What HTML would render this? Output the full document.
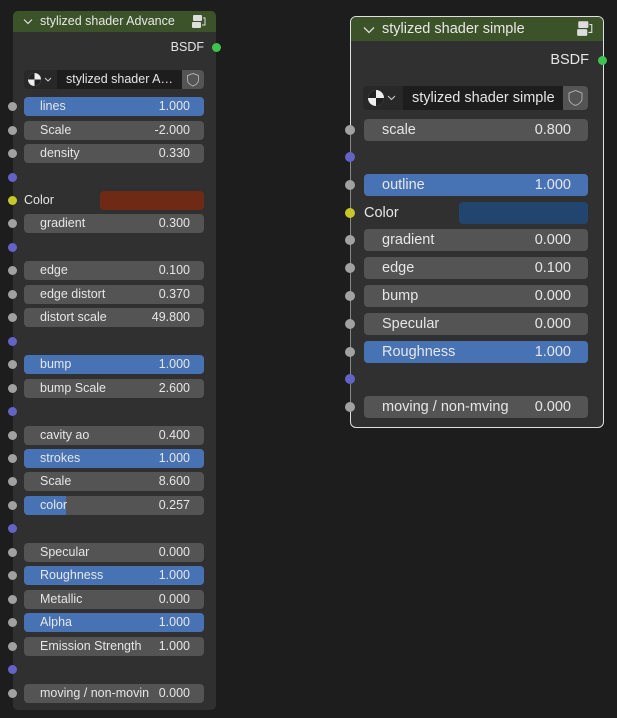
<!DOCTYPE html><html><head><style>
body{margin:0;width:617px;height:718px;background:#1d1d1d;position:relative;overflow:hidden;font-family:"Liberation Sans","DejaVu Sans",sans-serif;color:#e6e6e6}
.a{position:absolute;box-sizing:border-box}
.node{background:#303030;border-radius:5px;overflow:hidden}
.hdr{background:#3c5329;left:0;right:0;top:0}
.f{background:#545454;border-radius:4px;overflow:hidden}
.f .l{position:absolute;top:0;white-space:nowrap}
.f .v{position:absolute;top:0;white-space:nowrap}
.s{border-radius:50%;background:#a1a1a1}
.s.p{background:#6363c7}.s.y{background:#c7c729}.s.g{background:#3fc34f}
</style></head><body>
<div class="a node" style="left:13px;top:11px;width:203px;height:699px">
 <div class="a hdr" style="height:21px"></div>
 <svg class="a" style="left:10px;top:7px" width="10" height="7"><path d="M1 1.5l4 4 4-4" stroke="#ddd" stroke-width="1.2" fill="none"/></svg>
 <div class="a" style="left:27px;top:2px;font-size:12.5px;line-height:17px;color:#e8e8e8;white-space:nowrap">stylized shader Advance</div>
 <svg class="a" style="left:178px;top:3px" width="16" height="15" viewBox="0 0 16 15"><rect x="2" y="1" width="9" height="6" rx="1" fill="#ddd"/><rect x="1" y="8" width="9" height="6" rx="1" fill="#ddd"/><path d="M12 4h2v7h-3" stroke="#ddd" fill="none"/></svg>
 <div class="a" style="right:12px;top:28px;font-size:12.5px;line-height:16px">BSDF</div>
 <div class="a" style="left:11px;top:59px;width:33px;height:19px;background:#282828;border-radius:4px 0 0 4px"></div>
 <svg class="a" style="left:14px;top:61px" width="28" height="15"><circle cx="7.5" cy="7.5" r="6.5" fill="#eee"/><path d="M7.5 1A6.5 6.5 0 0 0 1 7.5H7.5V14A6.5 6.5 0 0 0 14 7.5H7.5Z" fill="#222"/><path d="M18 6l3 3 3-3" stroke="#ccc" fill="none"/></svg>
 <div class="a" style="left:44px;top:59px;width:125px;height:19px;background:#1d1d1d;font-size:12.5px;line-height:19px;padding-left:9px;white-space:nowrap">stylized shader A…</div>
 <div class="a" style="left:169px;top:59px;width:22px;height:19px;background:#545454;border-radius:0 4px 4px 0"></div>
 <svg class="a" style="left:173px;top:61px" width="14" height="15"><path d="M7 1.5L12.5 3.5V8C12.5 11 9.5 13 7 14C4.5 13 1.5 11 1.5 8V3.5Z" stroke="#aaa" fill="none"/></svg>
</div>
<div class="a s g" style="left:212px;top:43px;width:9px;height:9px"></div>
<div id="L"></div>
<div class="a node" style="left:350px;top:16px;width:254px;height:412px;border:1.5px solid #e0e0e0;border-radius:6px">
 <div class="a hdr" style="height:24px"></div>
 <svg class="a" style="left:12px;top:9px" width="12" height="8"><path d="M1 1.5l5 5 5-5" stroke="#ddd" stroke-width="1.3" fill="none"/></svg>
 <div class="a" style="left:31px;top:2px;font-size:14.5px;line-height:20px;color:#e8e8e8;white-space:nowrap">stylized shader simple</div>
 <svg class="a" style="left:225px;top:3px" width="18" height="17" viewBox="0 0 16 15"><rect x="2" y="1" width="9" height="6" rx="1" fill="#ddd"/><rect x="1" y="8" width="9" height="6" rx="1" fill="#ddd"/><path d="M12 4h2v7h-3" stroke="#ddd" fill="none"/></svg>
 <div class="a" style="right:14px;top:34px;font-size:14.5px;line-height:18px">BSDF</div>
 <div class="a" style="left:12px;top:69px;width:40px;height:24px;background:#282828;border-radius:4px 0 0 4px"></div>
 <svg class="a" style="left:16px;top:72px" width="34" height="18"><circle cx="9" cy="9" r="8" fill="#eee"/><path d="M9 1A8 8 0 0 0 1 9H9V17A8 8 0 0 0 17 9H9Z" fill="#222"/><path d="M21 7l3.5 3.5 3.5-3.5" stroke="#ccc" fill="none"/></svg>
 <div class="a" style="left:52px;top:69px;width:160px;height:24px;background:#1d1d1d;font-size:14.5px;line-height:24px;padding-left:9px;white-space:nowrap">stylized shader simple</div>
 <div class="a" style="left:212px;top:69px;width:25px;height:24px;background:#545454;border-radius:0 4px 4px 0"></div>
 <svg class="a" style="left:216px;top:72px" width="17" height="18"><path d="M8.5 1.5L15 4V9.5C15 13 11.5 15.5 8.5 16.5C5.5 15.5 2 13 2 9.5V4Z" stroke="#aaa" fill="none"/></svg>
</div>
<div class="a s g" style="left:598px;top:56px;width:9px;height:9px"></div>
<div class="a" style="left:350px;top:130px;width:1px;height:277px;background:#888"></div>
<div id="R"></div>
<script>
var L=[["f","lines","1.000",106,1],["f","Scale","-2.000",130],["f","density","0.330",153],["p",177],["c","Color","#6e2a14",200],["f","gradient","0.300",223],["p",247],["f","edge","0.100",270],["f","edge distort","0.370",294],["f","distort scale","49.800",317],["p",341],["f","bump","1.000",364,1],["f","bump Scale","2.600",388],["p",411],["f","cavity ao","0.400",435],["f","strokes","1.000",458,1],["f","Scale","8.600",481],["f","color","0.257",505,.24],["p",528],["f","Specular","0.000",552],["f","Roughness","1.000",575,1],["f","Metallic","0.000",599],["f","Alpha","1.000",622,1],["f","Emission Strength","1.000",646],["p",669],["f","moving / non-movin","0.000",693]];
var R=[["f","scale","0.800",130],["p",157],["f","outline","1.000",185,1],["c","Color","#224570",213],["f","gradient","0.000",240],["f","edge","0.100",268],["f","bump","0.000",296],["f","Specular","0.000",324],["f","Roughness","1.000",352,1],["p",379],["f","moving / non-mving","0.000",407]];
function build(arr,o){var h="";arr.forEach(function(r){var cy=r[0]=="p"?r[1]:r[3];var sx=o.sx-o.sr,sy=cy-o.sr,sc=r[0]=="p"?"p":r[0]=="c"?"y":"";
h+='<div class="a s '+sc+'" style="left:'+sx+'px;top:'+sy+'px;width:'+(o.sr*2)+'px;height:'+(o.sr*2)+'px"></div>';
if(r[0]=="f"){var fill=r[4]||0;h+='<div class="a f" style="left:'+o.x+'px;top:'+(cy-o.h/2)+'px;width:'+o.w+'px;height:'+o.h+'px;font-size:'+o.fs+'px;line-height:'+o.h+'px">'+(fill==1?'<div class="a" style="left:0;top:0;bottom:0;right:0;background:#4772b3"></div>':fill?'<div class="a" style="left:0;top:0;bottom:0;width:'+(fill*o.w*.98)+'px;background:#4772b3"></div>':'')+'<span class="l" style="left:'+o.lp+'px">'+r[1]+'</span><span class="v" style="right:'+o.rp+'px">'+r[2]+'</span></div>';}
if(r[0]=="c"){h+='<div class="a" style="left:'+(o.x)+'px;top:'+(cy-o.h/2)+'px;font-size:'+o.fs+'px;line-height:'+o.h+'px">'+r[1]+'</div><div class="a" style="left:'+o.cx+'px;top:'+(cy-o.h/2)+'px;width:'+(o.x+o.w-o.cx)+'px;height:'+o.h+'px;background:'+r[2]+';border-radius:4px"></div>';}
});return h;}
document.getElementById("L").outerHTML=build(L,{sx:12,sr:4.5,x:24,w:180,h:19,fs:12.5,lp:16,rp:14,cx:100});
document.getElementById("R").outerHTML=build(R,{sx:350,sr:5,x:364,w:224,h:22,fs:14.5,lp:18,rp:17,cx:459});
</script>
</body></html>
